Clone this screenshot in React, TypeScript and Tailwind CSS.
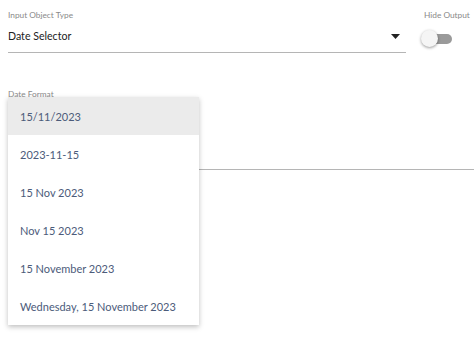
import { useState } from "react";

const formats = [
  "15/11/2023",
  "2023-11-15",
  "15 Nov 2023",
  "Nov 15 2023",
  "15 November 2023",
  "Wednesday, 15 November 2023",
];

export default function App() {
  const [selected] = useState(0);

  return (
    <div className="relative h-[356px] w-[474px] bg-white font-['Lato',sans-serif] text-[#333]">
      {/* top row */}
      <div className="flex gap-4 pl-2 pt-[9px]">
        <div className="w-[398px]">
          <div className="text-[8.3px] leading-[12px] text-[#8a8a8a]">Input Object Type</div>
          <div className="mt-[7px] flex h-[25px] items-start justify-between border-b border-[#b5b5b5]">
            <span className="text-[10.6px] leading-[16px] text-[#222]">Date Selector</span>
            <svg width="9" height="6" viewBox="0 0 9 6" className="mr-[6px] mt-[6px]">
              <path d="M0 0 L9 0 L4.5 5 Z" fill="#222" />
            </svg>
          </div>
        </div>
        <div className="pl-[2px]">
          <div className="text-[8.3px] leading-[12px] text-[#8a8a8a]">Hide Output</div>
          <div className="relative mt-[13px] h-[10px] w-[28px]">
            <div className="absolute left-[6px] top-0 h-[10px] w-[22px] rounded-full bg-[#9a9a9a]" />
            <div className="absolute left-[-3px] top-[-4px] h-[17px] w-[17px] rounded-full bg-[#f5f5f5] shadow-[0_1px_3px_rgba(0,0,0,0.4)]" />
          </div>
        </div>
      </div>

      {/* date format field */}
      <div className="mt-[35px]">
        <div className="pl-2 text-[8.3px] leading-[12px] text-[#8a8a8a]">Date Format</div>
        <div className="ml-2 h-[70px] border-b border-[#b5b5b5]" />
      </div>

      {/* open menu */}
      <div className="absolute left-2 top-[97px] w-[191px] bg-white shadow-[0_2px_5px_rgba(0,0,0,0.25)]">
        {formats.map((f, i) => (
          <div
            key={f}
            className={`flex h-[38px] items-center pl-3 pt-[3px] text-[11px] text-[#4c5b7a] ${
              i === selected ? "bg-[#ebebeb]" : ""
            }`}
          >
            {f}
          </div>
        ))}
      </div>
    </div>
  );
}
